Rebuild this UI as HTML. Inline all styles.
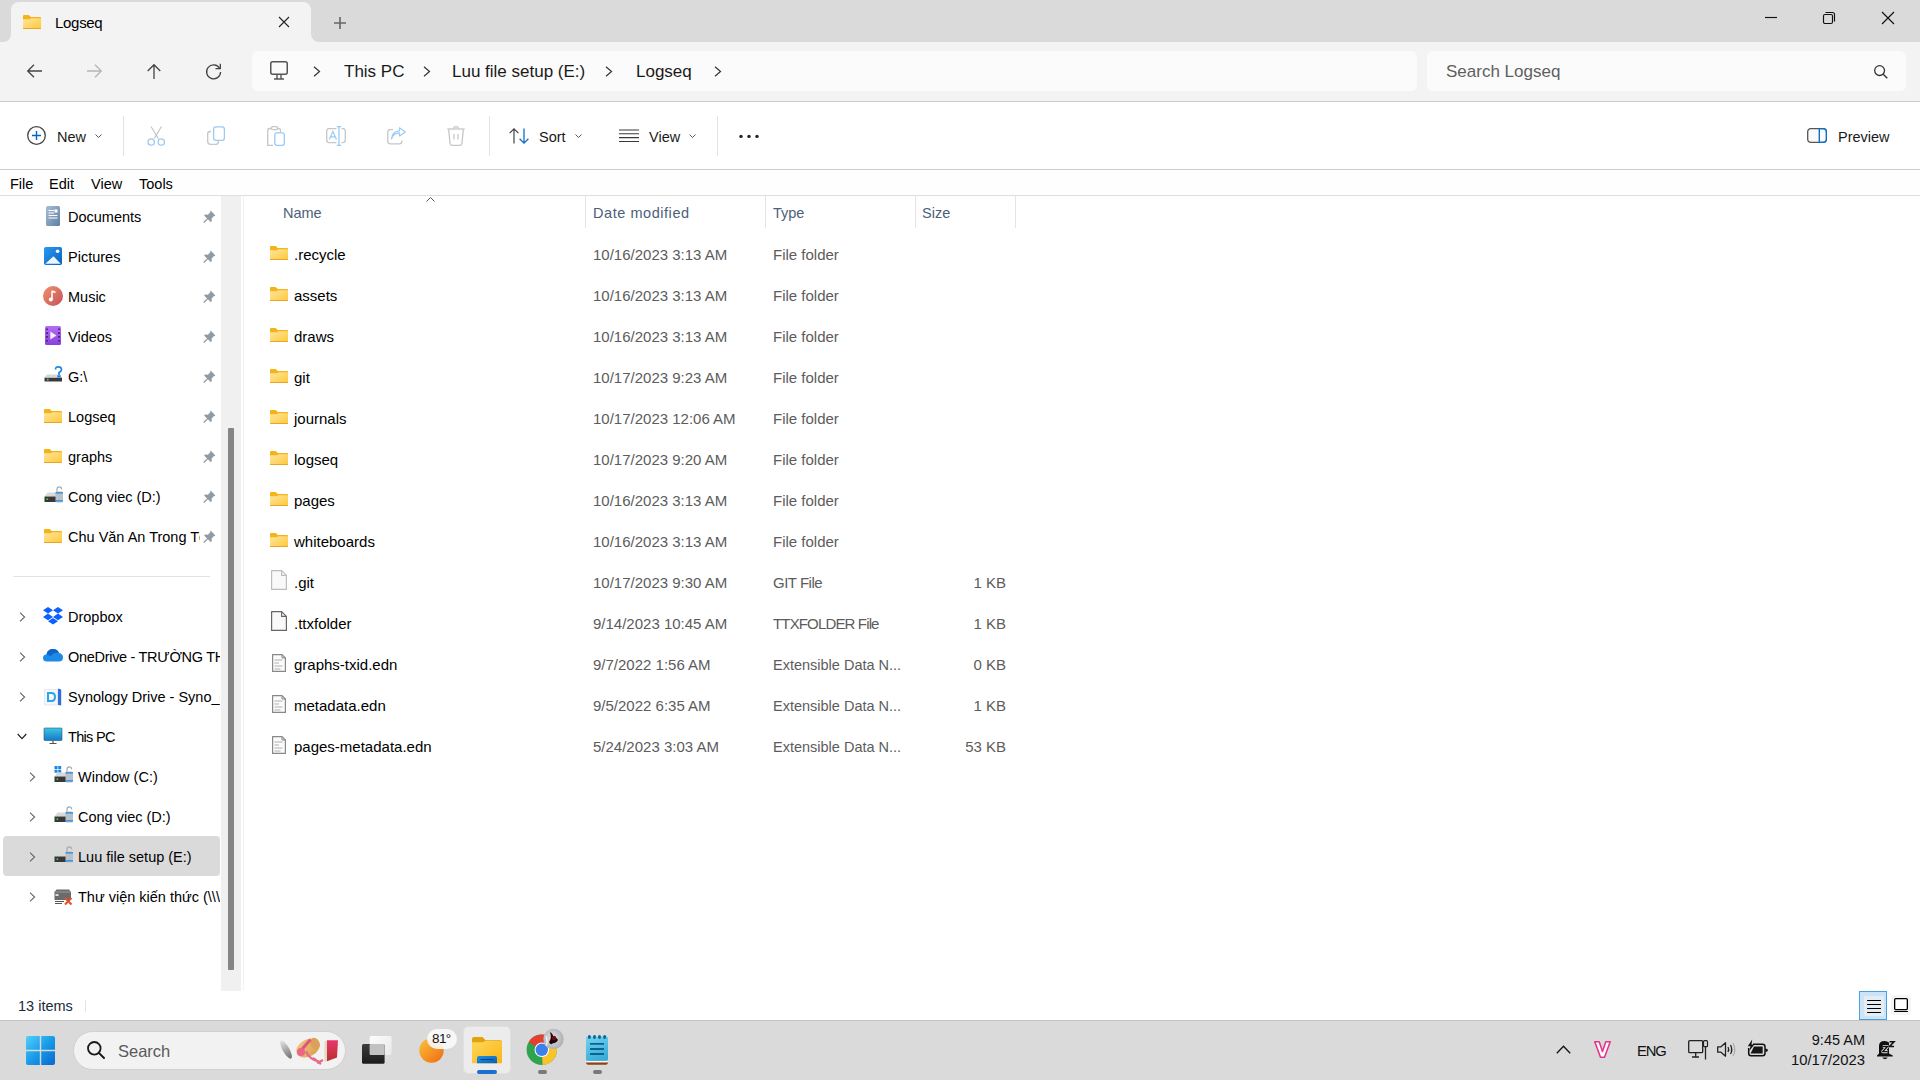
<!DOCTYPE html>
<html><head><meta charset="utf-8">
<style>
*{box-sizing:border-box;margin:0;padding:0}
html,body{width:1920px;height:1080px;overflow:hidden;background:#fff;font-family:"Liberation Sans",sans-serif;color:#1a1a1a}
.a{position:absolute}
.t{position:absolute;white-space:nowrap;line-height:20px;height:20px}
svg.i{position:absolute;overflow:visible}
#titlebar{left:0;top:0;width:1920px;height:42px;background:#dadada}
#tab{left:11px;top:2px;width:300px;height:40px;background:#f3f3f3;border-radius:8px 8px 0 0}
#addr{left:0;top:42px;width:1920px;height:59px;background:#f3f3f3}
#line1{left:0;top:101px;width:1920px;height:1px;background:#cacaca}
#toolbar{left:0;top:102px;width:1920px;height:67px;background:#fff}
#line2{left:0;top:169px;width:1920px;height:1px;background:#cdcdcd}
#menubar{left:0;top:170px;width:1920px;height:25px;background:#fefefe}
#line3{left:0;top:195px;width:1920px;height:1px;background:#dfdfdf}
#taskbar{left:0;top:1020px;width:1920px;height:60px;background:#dadada;border-top:1px solid #c4c4c4}
.box{background:#fbfbfb;border-radius:6px}
.f17{font-size:17px}
.f15{font-size:15px}
.f145{font-size:14.5px}
.sep{position:absolute;width:1px;background:#e3e3e3}
</style></head><body>
<svg width="0" height="0" style="position:absolute">
<defs>
<linearGradient id="fg" x1="0" y1="0" x2="1" y2="1"><stop offset="0" stop-color="#ffe59e"/><stop offset="1" stop-color="#fdc93a"/></linearGradient>
<symbol id="folder" viewBox="0 0 18 14">
<path d="M0 1 Q0 0 1 0 H5.6 L7.8 2 H17 Q18 2 18 3 V13 Q18 14 17 14 H1 Q0 14 0 13 Z" fill="#f3b319"/>
<path d="M0 4.2 H7.2 L8 3.2 H17 Q18 3.2 18 4.2 V13 Q18 14 17 14 H1 Q0 14 0 13 Z" fill="url(#fg)"/>
<rect x="0" y="13" width="18" height="1" rx="0.5" fill="#eaa623"/>
</symbol>
</defs>
</svg>
<div id="titlebar" class="a"></div>
<div id="tab" class="a"></div>
<!-- inverse bottom corners of tab -->
<div class="a" style="left:3px;top:34px;width:8px;height:8px;background:#f3f3f3"></div>
<div class="a" style="left:3px;top:34px;width:8px;height:8px;background:#dadada;border-radius:0 0 8px 0"></div>
<div class="a" style="left:311px;top:34px;width:8px;height:8px;background:#f3f3f3"></div>
<div class="a" style="left:311px;top:34px;width:8px;height:8px;background:#dadada;border-radius:0 0 0 8px"></div>
<svg class="i" style="left:23px;top:15px" width="18" height="14"><use href="#folder"/></svg>
<div class="t f15" style="left:55px;top:12.5px;color:#000;letter-spacing:-0.3px">Logseq</div>
<svg class="i" style="left:279px;top:17px" width="10" height="10"><path d="M0 0L10 10M10 0L0 10" stroke="#222" stroke-width="1.1"/></svg>
<svg class="i" style="left:334px;top:17px" width="12" height="12"><path d="M6 0V12M0 6H12" stroke="#666" stroke-width="1.6"/></svg>
<!-- window controls -->
<svg class="i" style="left:1765px;top:12px" width="12" height="12"><path d="M0 5.5H12" stroke="#111" stroke-width="1.15"/></svg>
<svg class="i" style="left:1823px;top:12px" width="12" height="12"><rect x="0.5" y="2.5" width="9" height="9" rx="1.5" fill="none" stroke="#111" stroke-width="1.15"/><path d="M2.5 0.5H9.5Q11.5 0.5 11.5 2.5V9.5" fill="none" stroke="#111" stroke-width="1.15"/></svg>
<svg class="i" style="left:1882px;top:12px" width="12" height="12"><path d="M0 0L12 12M12 0L0 12" stroke="#111" stroke-width="1.15"/></svg>

<div id="addr" class="a"></div>
<!-- nav arrows -->
<svg class="i" style="left:27px;top:64px" width="15" height="14"><path d="M0.7 7H15M7 0.7L0.7 7L7 13.3" fill="none" stroke="#444" stroke-width="1.3"/></svg>
<svg class="i" style="left:87px;top:64px" width="15" height="14"><path d="M0 7H14.3M8 0.7L14.3 7L8 13.3" fill="none" stroke="#b5b5b5" stroke-width="1.3"/></svg>
<svg class="i" style="left:147px;top:64px" width="14" height="15"><path d="M7 0.7V15M0.7 7L7 0.7L13.3 7" fill="none" stroke="#444" stroke-width="1.3"/></svg>
<svg class="i" style="left:206px;top:63px" width="16" height="16"><path d="M13.6 5.2A7 7 0 1 0 14.6 9" fill="none" stroke="#444" stroke-width="1.3"/><path d="M14.3 0.8V5.6H9.5" fill="none" stroke="#444" stroke-width="1.3"/></svg>
<div class="a box" style="left:252px;top:51px;width:1165px;height:40px"></div>
<svg class="i" style="left:270px;top:61px" width="18" height="19"><rect x="0.75" y="0.75" width="16.5" height="12.5" rx="2" fill="none" stroke="#555" stroke-width="1.5"/><path d="M7 14V17.5M11 14V17.5M4 18H14" stroke="#555" stroke-width="1.4"/></svg>
<svg class="i" style="left:313px;top:66px" width="8" height="11"><path d="M1 0.8L6.5 5.5L1 10.2" fill="none" stroke="#333" stroke-width="1.2"/></svg>
<div class="t f17" style="left:344px;top:62px;color:#1a1a1a">This PC</div>
<svg class="i" style="left:423px;top:66px" width="8" height="11"><path d="M1 0.8L6.5 5.5L1 10.2" fill="none" stroke="#333" stroke-width="1.2"/></svg>
<div class="t f17" style="left:452px;top:62px;color:#1a1a1a">Luu file setup (E:)</div>
<svg class="i" style="left:605px;top:66px" width="8" height="11"><path d="M1 0.8L6.5 5.5L1 10.2" fill="none" stroke="#333" stroke-width="1.2"/></svg>
<div class="t f17" style="left:636px;top:62px;color:#1a1a1a">Logseq</div>
<svg class="i" style="left:714px;top:66px" width="8" height="11"><path d="M1 0.8L6.5 5.5L1 10.2" fill="none" stroke="#333" stroke-width="1.2"/></svg>
<div class="a box" style="left:1427px;top:51px;width:479px;height:40px"></div>
<div class="t f17" style="left:1446px;top:62px;color:#5f5f5f">Search Logseq</div>
<svg class="i" style="left:1874px;top:65px" width="14" height="14"><circle cx="5.6" cy="5.6" r="4.9" fill="none" stroke="#333" stroke-width="1.3"/><path d="M9.2 9.2L13.3 13.3" stroke="#333" stroke-width="1.4"/></svg>
<div id="line1" class="a"></div>

<div id="toolbar" class="a"></div>
<svg class="i" style="left:27px;top:126px" width="19" height="19"><circle cx="9.5" cy="9.5" r="8.8" fill="none" stroke="#444" stroke-width="1.3"/><path d="M9.5 5V14M5 9.5H14" stroke="#0067c0" stroke-width="1.4"/></svg>
<div class="t f145" style="left:57px;top:127px;color:#1a1a1a">New</div>
<svg class="i" style="left:95px;top:134px" width="7" height="5"><path d="M0.5 0.5L3.5 3.5L6.5 0.5" fill="none" stroke="#555" stroke-width="1"/></svg>
<div class="sep" style="left:123px;top:116px;height:40px"></div>
<!-- cut -->
<svg class="i" style="left:147px;top:126px" width="19" height="20"><path d="M4 0.5L11.3 12.5M14.5 0.5L7.2 12.5" stroke="#c2c2c2" stroke-width="1.1" fill="none"/><circle cx="4.2" cy="16" r="3.2" fill="none" stroke="#9ccaf2" stroke-width="1.3"/><circle cx="14.3" cy="16" r="3.2" fill="none" stroke="#9ccaf2" stroke-width="1.3"/></svg>
<!-- copy -->
<svg class="i" style="left:207px;top:126px" width="18" height="19"><path d="M4 5.5H3Q0.7 5.5 0.7 7.8V15.5Q0.7 18.3 3.5 18.3H9Q11.3 18.3 11.3 16V15" fill="none" stroke="#c6c6c6" stroke-width="1.3"/><rect x="6.6" y="0.8" width="10.8" height="13.6" rx="2.4" fill="none" stroke="#9ccaf2" stroke-width="1.3"/></svg>
<!-- paste -->
<svg class="i" style="left:267px;top:126px" width="18" height="20"><path d="M4.5 2.5H2.5Q0.7 2.5 0.7 4.5V19.3H6" fill="none" stroke="#c6c6c6" stroke-width="1.3"/><path d="M13.5 6V4.5Q13.5 2.5 11.5 2.5H10" fill="none" stroke="#c6c6c6" stroke-width="1.3"/><rect x="4.5" y="0.7" width="6" height="3" rx="1.3" fill="none" stroke="#c6c6c6" stroke-width="1.2"/><rect x="7.8" y="6.8" width="9.5" height="12.5" rx="2" fill="none" stroke="#9ccaf2" stroke-width="1.3"/></svg>
<!-- rename -->
<svg class="i" style="left:326px;top:126px" width="20" height="20"><path d="M10.5 2.6H3Q0.7 2.6 0.7 5V14Q0.7 16.6 3 16.6H10.5" fill="none" stroke="#c6c6c6" stroke-width="1.3"/><path d="M15.5 2.6H17Q19.3 2.6 19.3 5V14Q19.3 16.6 17 16.6H15.5" fill="none" stroke="#c6c6c6" stroke-width="1.3"/><path d="M13 0.7V19.3M10.8 0.7H15.2M10.8 19.3H15.2" stroke="#9ccaf2" stroke-width="1.3"/><path d="M3.3 13.5L6.9 5.5L10.5 13.5M4.6 10.8H9.2" fill="none" stroke="#9ccaf2" stroke-width="1.2"/></svg>
<!-- share -->
<svg class="i" style="left:387px;top:127px" width="19" height="18"><path d="M6 2.6H3.2Q0.8 2.6 0.8 5V14.3Q0.8 16.8 3.2 16.8H12.5Q14.8 16.8 14.8 14.5V13.5" fill="none" stroke="#c6c6c6" stroke-width="1.3"/><path d="M4.5 12Q6 6 12.5 5.8V9L18.3 4.9L12.5 0.8V3.8Q5 4.2 4.5 12Z" fill="none" stroke="#9ccaf2" stroke-width="1.2" stroke-linejoin="round"/></svg>
<!-- delete -->
<svg class="i" style="left:447px;top:126px" width="18" height="20"><path d="M0.3 3H17.7" stroke="#c6c6c6" stroke-width="1.3"/><path d="M6.6 2.8Q6.8 0.7 9 0.7Q11.2 0.7 11.4 2.8" fill="none" stroke="#c6c6c6" stroke-width="1.2"/><path d="M1.7 3.5L3 17.3Q3.2 19.3 5 19.3H13Q14.8 19.3 15 17.3L16.3 3.5" fill="none" stroke="#c6c6c6" stroke-width="1.3"/><path d="M7 8V13.5M11 8V13.5" stroke="#c6c6c6" stroke-width="1.3"/></svg>
<div class="sep" style="left:489px;top:116px;height:40px"></div>
<!-- sort -->
<svg class="i" style="left:509px;top:128px" width="21" height="16"><path d="M5 15.5V0.8M0.6 5.2L5 0.8L9.4 5.2" fill="none" stroke="#444" stroke-width="1.2"/><path d="M15 0.5V15.2M10.6 10.8L15 15.2L19.4 10.8" fill="none" stroke="#0f6fc6" stroke-width="1.3"/></svg>
<div class="t f145" style="left:539px;top:127px;color:#1a1a1a">Sort</div>
<svg class="i" style="left:575px;top:134px" width="7" height="5"><path d="M0.5 0.5L3.5 3.5L6.5 0.5" fill="none" stroke="#555" stroke-width="1"/></svg>
<!-- view -->
<svg class="i" style="left:619px;top:129px" width="20" height="14"><path d="M0 1H20M0 4.8H20M0 8.6H20M0 12.4H20" stroke="#3a3a3a" stroke-width="1.05"/></svg>
<div class="t f145" style="left:649px;top:127px;color:#1a1a1a">View</div>
<svg class="i" style="left:689px;top:134px" width="7" height="5"><path d="M0.5 0.5L3.5 3.5L6.5 0.5" fill="none" stroke="#555" stroke-width="1"/></svg>
<div class="sep" style="left:717px;top:116px;height:40px"></div>
<svg class="i" style="left:739px;top:134px" width="20" height="5"><circle cx="2" cy="2.4" r="1.7" fill="#222"/><circle cx="10" cy="2.4" r="1.7" fill="#222"/><circle cx="18" cy="2.4" r="1.7" fill="#222"/></svg>
<!-- preview -->
<svg class="i" style="left:1807px;top:128px" width="20" height="15"><rect x="0.7" y="0.7" width="18.6" height="13.6" rx="3" fill="#fafafa" stroke="#555" stroke-width="1.3"/><path d="M12.3 0.7H16.3Q19.3 0.7 19.3 3.7V11.3Q19.3 14.3 16.3 14.3H12.3Z" fill="#fafafa" stroke="#0f6fc6" stroke-width="1.4"/></svg>
<div class="t f145" style="left:1838px;top:127px;color:#1a1a1a">Preview</div>
<div id="line2" class="a"></div>

<div id="menubar" class="a"></div>
<div class="t f145" style="left:10px;top:174px;color:#000">File</div>
<div class="t f145" style="left:49px;top:174px;color:#000">Edit</div>
<div class="t f145" style="left:91px;top:174px;color:#000">View</div>
<div class="t f145" style="left:139px;top:174px;color:#000">Tools</div>
<div id="line3" class="a"></div>
<div class="a" style="left:221px;top:196px;width:20px;height:795px;background:#f0f0f0"></div>
<div class="a" style="left:228px;top:428px;width:6px;height:542px;background:#858585;border-radius:1px"></div>
<div class="a" style="left:243px;top:196px;width:1px;height:795px;background:#f2f2f2"></div>
<svg class="i" style="left:46px;top:206px" width="14" height="20"><defs><linearGradient id="dg" x1="0" y1="0" x2="1" y2="1"><stop offset="0" stop-color="#a9bfd6"/><stop offset="1" stop-color="#5d7ea3"/></linearGradient></defs><rect x="0" y="0" width="14" height="20" rx="1.5" fill="url(#dg)"/><path d="M2.5 4.5H8M2.5 7H8M2.5 9.5H11.5M2.5 12H11.5" stroke="#fff" stroke-width="1"/><rect x="8.5" y="3.5" width="3" height="3" fill="#fff"/></svg>
<div class="t f145" style="left:68px;top:207px;width:150px;overflow:hidden;color:#000">Documents</div>
<svg class="i" style="left:203px;top:210px" width="13" height="13"><path d="M7.6 0.6L12.4 5.4L10.8 6.2L8.6 8.4L8.8 11.3L7.7 12.1L4.9 9.3L1.2 13L0.3 12.1L4 8.4L1.2 5.6L2 4.5L4.9 4.7L7.1 2.5Z" fill="#8f9aa3"/></svg>
<svg class="i" style="left:44px;top:247px" width="18" height="18"><defs><linearGradient id="pg" x1="0" y1="0" x2="1" y2="1"><stop offset="0" stop-color="#2a9af0"/><stop offset="1" stop-color="#0a62c0"/></linearGradient></defs><rect x="0" y="0" width="18" height="18" rx="1.8" fill="url(#pg)"/><path d="M1.3 16.7L9.5 9.2L16.7 16.7Z" fill="#eef6ff"/><circle cx="13.6" cy="4.3" r="1.8" fill="#fff"/></svg>
<div class="t f145" style="left:68px;top:247px;width:150px;overflow:hidden;color:#000">Pictures</div>
<svg class="i" style="left:203px;top:250px" width="13" height="13"><path d="M7.6 0.6L12.4 5.4L10.8 6.2L8.6 8.4L8.8 11.3L7.7 12.1L4.9 9.3L1.2 13L0.3 12.1L4 8.4L1.2 5.6L2 4.5L4.9 4.7L7.1 2.5Z" fill="#8f9aa3"/></svg>
<svg class="i" style="left:43px;top:286px" width="20" height="20"><defs><linearGradient id="mg" x1="0" y1="0" x2="1" y2="1"><stop offset="0" stop-color="#f0936a"/><stop offset="1" stop-color="#c5505c"/></linearGradient></defs><circle cx="10" cy="10" r="10" fill="url(#mg)"/><path d="M9 5V13M9 5L12.5 6.5" stroke="#fff" stroke-width="1.5" fill="none"/><circle cx="7.8" cy="13.5" r="2" fill="#fff"/></svg>
<div class="t f145" style="left:68px;top:287px;width:150px;overflow:hidden;color:#000">Music</div>
<svg class="i" style="left:203px;top:290px" width="13" height="13"><path d="M7.6 0.6L12.4 5.4L10.8 6.2L8.6 8.4L8.8 11.3L7.7 12.1L4.9 9.3L1.2 13L0.3 12.1L4 8.4L1.2 5.6L2 4.5L4.9 4.7L7.1 2.5Z" fill="#8f9aa3"/></svg>
<svg class="i" style="left:45px;top:326px" width="16" height="19"><defs><linearGradient id="vg" x1="0" y1="0" x2="0" y2="1"><stop offset="0" stop-color="#b46ef0"/><stop offset="1" stop-color="#8840dc"/></linearGradient></defs><rect x="0" y="0" width="16" height="19" rx="1.5" fill="url(#vg)"/><path d="M5.3 5.5L11.5 9.5L5.3 13.5Z" fill="#f4ecff"/><path d="M2 2.5V16.5M14 2.5V16.5" stroke="#3a1a6a" stroke-width="1.6" stroke-dasharray="1.6 2.2"/></svg>
<div class="t f145" style="left:68px;top:327px;width:150px;overflow:hidden;color:#000">Videos</div>
<svg class="i" style="left:203px;top:330px" width="13" height="13"><path d="M7.6 0.6L12.4 5.4L10.8 6.2L8.6 8.4L8.8 11.3L7.7 12.1L4.9 9.3L1.2 13L0.3 12.1L4 8.4L1.2 5.6L2 4.5L4.9 4.7L7.1 2.5Z" fill="#8f9aa3"/></svg>
<svg class="i" style="left:44px;top:366px" width="20" height="16"><path d="M0.5 11.5H18V15.5H0.5Z" fill="#3a3a3a"/><path d="M0.5 11.5L3 8.5H16L18 11.5Z" fill="#d6d6d6"/><circle cx="3.8" cy="13.5" r="0.9" fill="#4fd34f"/><path d="M11.5 3.5Q11.5 0.8 14.5 0.8Q17.5 0.8 17.5 3.5Q17.5 5.5 15 6.5V9" fill="none" stroke="#1c86e0" stroke-width="1.7"/><rect x="13.3" y="9.3" width="3.4" height="2.2" fill="#1c86e0"/></svg>
<div class="t f145" style="left:68px;top:367px;width:150px;overflow:hidden;color:#000">G:\</div>
<svg class="i" style="left:203px;top:370px" width="13" height="13"><path d="M7.6 0.6L12.4 5.4L10.8 6.2L8.6 8.4L8.8 11.3L7.7 12.1L4.9 9.3L1.2 13L0.3 12.1L4 8.4L1.2 5.6L2 4.5L4.9 4.7L7.1 2.5Z" fill="#8f9aa3"/></svg>
<svg class="i" style="left:44px;top:409px" width="18" height="14"><use href="#folder"/></svg>
<div class="t f145" style="left:68px;top:407px;width:150px;overflow:hidden;color:#000">Logseq</div>
<svg class="i" style="left:203px;top:410px" width="13" height="13"><path d="M7.6 0.6L12.4 5.4L10.8 6.2L8.6 8.4L8.8 11.3L7.7 12.1L4.9 9.3L1.2 13L0.3 12.1L4 8.4L1.2 5.6L2 4.5L4.9 4.7L7.1 2.5Z" fill="#8f9aa3"/></svg>
<svg class="i" style="left:44px;top:449px" width="18" height="14"><use href="#folder"/></svg>
<div class="t f145" style="left:68px;top:447px;width:150px;overflow:hidden;color:#000">graphs</div>
<svg class="i" style="left:203px;top:450px" width="13" height="13"><path d="M7.6 0.6L12.4 5.4L10.8 6.2L8.6 8.4L8.8 11.3L7.7 12.1L4.9 9.3L1.2 13L0.3 12.1L4 8.4L1.2 5.6L2 4.5L4.9 4.7L7.1 2.5Z" fill="#8f9aa3"/></svg>
<svg class="i" style="left:44px;top:486px" width="20" height="18"><path d="M0.5 10.5L3.5 6.5H12.5V10.5Z" fill="#d9d9d9"/><rect x="0.5" y="10.5" width="12" height="5.5" fill="#383838"/><circle cx="3.3" cy="13.2" r="0.9" fill="#3fd03f"/><path d="M13 6V3.2Q13 0.8 15.3 0.8Q17.6 0.8 17.6 3.2" fill="none" stroke="#a3acb4" stroke-width="1.2"/><rect x="11.5" y="5.5" width="7.5" height="11" rx="1.6" fill="#b9c1c8"/><rect x="11.5" y="6.2" width="7.5" height="1.3" fill="#2a8ae0"/><rect x="11.5" y="14.2" width="7.5" height="1.3" fill="#2a8ae0"/></svg>
<div class="t f145" style="left:68px;top:487px;width:150px;overflow:hidden;color:#000">Cong viec (D:)</div>
<svg class="i" style="left:203px;top:490px" width="13" height="13"><path d="M7.6 0.6L12.4 5.4L10.8 6.2L8.6 8.4L8.8 11.3L7.7 12.1L4.9 9.3L1.2 13L0.3 12.1L4 8.4L1.2 5.6L2 4.5L4.9 4.7L7.1 2.5Z" fill="#8f9aa3"/></svg>
<svg class="i" style="left:44px;top:529px" width="18" height="14"><use href="#folder"/></svg>
<div class="t f145" style="left:68px;top:527px;width:132px;overflow:hidden;color:#000">Chu Văn An Trong Tổ</div>
<svg class="i" style="left:203px;top:530px" width="13" height="13"><path d="M7.6 0.6L12.4 5.4L10.8 6.2L8.6 8.4L8.8 11.3L7.7 12.1L4.9 9.3L1.2 13L0.3 12.1L4 8.4L1.2 5.6L2 4.5L4.9 4.7L7.1 2.5Z" fill="#8f9aa3"/></svg>
<div class="a" style="left:13px;top:576px;width:197px;height:1px;background:#e2e2e2"></div>
<div class="a" style="left:3px;top:836px;width:217px;height:40px;background:#dadada;border-radius:4px"></div>
<svg class="i" style="left:19px;top:612px" width="7" height="10"><path d="M1 0.7L5.6 5L1 9.3" fill="none" stroke="#666" stroke-width="1.1"/></svg>
<svg class="i" style="left:43px;top:607px" width="20" height="18"><path d="M5 0L0 3.3L5 6.6L10 3.3ZM15 0L10 3.3L15 6.6L20 3.3ZM0 9.9L5 13.2L10 9.9L5 6.6ZM15 6.6L10 9.9L15 13.2L20 9.9ZM5 14.3L10 17.6L15 14.3L10 11Z" fill="#0b61ff"/></svg>
<div class="t f145" style="left:68px;top:607px;width:152px;overflow:hidden;color:#000;">Dropbox</div>
<svg class="i" style="left:19px;top:652px" width="7" height="10"><path d="M1 0.7L5.6 5L1 9.3" fill="none" stroke="#666" stroke-width="1.1"/></svg>
<svg class="i" style="left:43px;top:648px" width="20" height="14"><path d="M4 13.5Q0 13.5 0 10Q0 6.8 3.5 6.5Q4.5 1 10 1Q14.5 1 16 5Q20 5.5 20 9.5Q20 13.5 16 13.5Z" fill="#1d8ae8"/><path d="M3.5 6.5Q4.5 1 10 1Q14.5 1 16 5Q11 4 8 8Z" fill="#0f64c8"/></svg>
<div class="t f145" style="left:68px;top:647px;width:152px;overflow:hidden;color:#000;letter-spacing:-0.3px;">OneDrive - TRƯỜNG THPT</div>
<svg class="i" style="left:19px;top:692px" width="7" height="10"><path d="M1 0.7L5.6 5L1 9.3" fill="none" stroke="#666" stroke-width="1.1"/></svg>
<svg class="i" style="left:44px;top:688px" width="18" height="18"><path d="M0.5 1.5H13.5V17H0.5Z" fill="#f4f7fb" stroke="#dfe4ea" stroke-width="0.8"/><path d="M14 0.5L17.2 1.5V17.5L14 17Z" fill="#2f6fe0"/><path d="M4 5H7.5Q11 5 11 9Q11 13 7.5 13H4Z" fill="none" stroke="#2aa7e6" stroke-width="2"/></svg>
<div class="t f145" style="left:68px;top:687px;width:152px;overflow:hidden;color:#000;">Synology Drive - Syno_ds</div>
<svg class="i" style="left:17px;top:733px" width="10" height="7"><path d="M0.7 1L5 5.6L9.3 1" fill="none" stroke="#222" stroke-width="1.2"/></svg>
<svg class="i" style="left:44px;top:728px" width="18" height="17"><defs><linearGradient id="pcg" x1="0" y1="0" x2="0" y2="1"><stop offset="0" stop-color="#3ec6e0"/><stop offset="1" stop-color="#1478c8"/></linearGradient></defs><rect x="0" y="0" width="18" height="12.5" rx="0.8" fill="url(#pcg)" stroke="#1a5a8a" stroke-width="0.6"/><path d="M9 12.5V15M5.5 15.5H12.5" stroke="#555" stroke-width="1.2"/></svg>
<div class="t f145" style="left:68px;top:727px;width:152px;overflow:hidden;color:#000;letter-spacing:-0.7px;">This PC</div>
<svg class="i" style="left:29px;top:772px" width="7" height="10"><path d="M1 0.7L5.6 5L1 9.3" fill="none" stroke="#666" stroke-width="1.1"/></svg>
<svg class="i" style="left:54px;top:766px" width="20" height="18"><rect x="0.5" y="0" width="3" height="3" fill="#1a86e8"/><rect x="4.2" y="0" width="3" height="3" fill="#1a86e8"/><rect x="0.5" y="3.7" width="3" height="3" fill="#1a86e8"/><rect x="4.2" y="3.7" width="3" height="3" fill="#1a86e8"/><path d="M0.5 10.5L3.5 6.5H12.5V10.5Z" fill="#d9d9d9"/><rect x="0.5" y="10.5" width="12" height="5.5" fill="#383838"/><circle cx="3.3" cy="13.2" r="0.9" fill="#3fd03f"/><path d="M13 6V3.2Q13 0.8 15.3 0.8Q17.6 0.8 17.6 3.2" fill="none" stroke="#a3acb4" stroke-width="1.2"/><rect x="11.5" y="5.5" width="7.5" height="11" rx="1.6" fill="#b9c1c8"/><rect x="11.5" y="6.2" width="7.5" height="1.3" fill="#2a8ae0"/><rect x="11.5" y="14.2" width="7.5" height="1.3" fill="#2a8ae0"/></svg>
<div class="t f145" style="left:78px;top:767px;width:142px;overflow:hidden;color:#000;">Window (C:)</div>
<svg class="i" style="left:29px;top:812px" width="7" height="10"><path d="M1 0.7L5.6 5L1 9.3" fill="none" stroke="#666" stroke-width="1.1"/></svg>
<svg class="i" style="left:54px;top:806px" width="20" height="18"><path d="M0.5 10.5L3.5 6.5H12.5V10.5Z" fill="#d9d9d9"/><rect x="0.5" y="10.5" width="12" height="5.5" fill="#383838"/><circle cx="3.3" cy="13.2" r="0.9" fill="#3fd03f"/><path d="M13 6V3.2Q13 0.8 15.3 0.8Q17.6 0.8 17.6 3.2" fill="none" stroke="#a3acb4" stroke-width="1.2"/><rect x="11.5" y="5.5" width="7.5" height="11" rx="1.6" fill="#b9c1c8"/><rect x="11.5" y="6.2" width="7.5" height="1.3" fill="#2a8ae0"/><rect x="11.5" y="14.2" width="7.5" height="1.3" fill="#2a8ae0"/></svg>
<div class="t f145" style="left:78px;top:807px;width:142px;overflow:hidden;color:#000;">Cong viec (D:)</div>
<svg class="i" style="left:29px;top:852px" width="7" height="10"><path d="M1 0.7L5.6 5L1 9.3" fill="none" stroke="#666" stroke-width="1.1"/></svg>
<svg class="i" style="left:54px;top:846px" width="20" height="18"><path d="M0.5 10.5L3.5 6.5H12.5V10.5Z" fill="#d9d9d9"/><rect x="0.5" y="10.5" width="12" height="5.5" fill="#383838"/><circle cx="3.3" cy="13.2" r="0.9" fill="#3fd03f"/><path d="M13 6V3.2Q13 0.8 15.3 0.8Q17.6 0.8 17.6 3.2" fill="none" stroke="#a3acb4" stroke-width="1.2"/><rect x="11.5" y="5.5" width="7.5" height="11" rx="1.6" fill="#b9c1c8"/><rect x="11.5" y="6.2" width="7.5" height="1.3" fill="#2a8ae0"/><rect x="11.5" y="14.2" width="7.5" height="1.3" fill="#2a8ae0"/></svg>
<div class="t f145" style="left:78px;top:847px;width:142px;overflow:hidden;color:#000;">Luu file setup (E:)</div>
<svg class="i" style="left:29px;top:892px" width="7" height="10"><path d="M1 0.7L5.6 5L1 9.3" fill="none" stroke="#666" stroke-width="1.1"/></svg>
<svg class="i" style="left:54px;top:889px" width="19" height="16"><path d="M0.5 3L2.5 0.5H15L17 3V11H0.5Z" fill="#6b6b6b"/><path d="M0.5 3H17" stroke="#9a9a9a"/><rect x="1.5" y="5" width="3" height="2" fill="#ddd"/><path d="M1 12.5H10M1 14.5H8" stroke="#555" stroke-width="1.2"/><path d="M11 9L17.5 15.5M17.5 9L11 15.5" stroke="#e0502a" stroke-width="2"/></svg>
<div class="t f145" style="left:78px;top:887px;width:142px;overflow:hidden;color:#000;">Thư viện kiến thức (\\\\</div>
<div class="t f145" style="left:283px;top:203px;color:#4c607a">Name</div>
<svg class="i" style="left:426px;top:197px" width="9" height="5"><path d="M0.5 4.5L4.5 0.5L8.5 4.5" fill="none" stroke="#555" stroke-width="1"/></svg>
<div class="t f145" style="left:593px;top:203px;color:#4c607a;letter-spacing:0.55px">Date modified</div>
<div class="t f145" style="left:773px;top:203px;color:#4c607a">Type</div>
<div class="t f145" style="left:922px;top:203px;color:#4c607a">Size</div>
<div class="a" style="left:585px;top:196px;width:1px;height:32px;background:#e5e5e5"></div>
<div class="a" style="left:765px;top:196px;width:1px;height:32px;background:#e5e5e5"></div>
<div class="a" style="left:915px;top:196px;width:1px;height:32px;background:#e5e5e5"></div>
<div class="a" style="left:1015px;top:196px;width:1px;height:32px;background:#e5e5e5"></div>
<svg class="i" style="left:270px;top:246px" width="18" height="14"><use href="#folder"/></svg>
<div class="t f15" style="left:294px;top:245px;color:#000">.recycle</div>
<div class="t f15" style="left:593px;top:245px;color:#5c5c5c">10/16/2023 3:13 AM</div>
<div class="t f15" style="left:773px;top:245px;color:#5c5c5c;">File folder</div>
<svg class="i" style="left:270px;top:287px" width="18" height="14"><use href="#folder"/></svg>
<div class="t f15" style="left:294px;top:286px;color:#000">assets</div>
<div class="t f15" style="left:593px;top:286px;color:#5c5c5c">10/16/2023 3:13 AM</div>
<div class="t f15" style="left:773px;top:286px;color:#5c5c5c;">File folder</div>
<svg class="i" style="left:270px;top:328px" width="18" height="14"><use href="#folder"/></svg>
<div class="t f15" style="left:294px;top:327px;color:#000">draws</div>
<div class="t f15" style="left:593px;top:327px;color:#5c5c5c">10/16/2023 3:13 AM</div>
<div class="t f15" style="left:773px;top:327px;color:#5c5c5c;">File folder</div>
<svg class="i" style="left:270px;top:369px" width="18" height="14"><use href="#folder"/></svg>
<div class="t f15" style="left:294px;top:368px;color:#000">git</div>
<div class="t f15" style="left:593px;top:368px;color:#5c5c5c">10/17/2023 9:23 AM</div>
<div class="t f15" style="left:773px;top:368px;color:#5c5c5c;">File folder</div>
<svg class="i" style="left:270px;top:410px" width="18" height="14"><use href="#folder"/></svg>
<div class="t f15" style="left:294px;top:409px;color:#000">journals</div>
<div class="t f15" style="left:593px;top:409px;color:#5c5c5c">10/17/2023 12:06 AM</div>
<div class="t f15" style="left:773px;top:409px;color:#5c5c5c;">File folder</div>
<svg class="i" style="left:270px;top:451px" width="18" height="14"><use href="#folder"/></svg>
<div class="t f15" style="left:294px;top:450px;color:#000">logseq</div>
<div class="t f15" style="left:593px;top:450px;color:#5c5c5c">10/17/2023 9:20 AM</div>
<div class="t f15" style="left:773px;top:450px;color:#5c5c5c;">File folder</div>
<svg class="i" style="left:270px;top:492px" width="18" height="14"><use href="#folder"/></svg>
<div class="t f15" style="left:294px;top:491px;color:#000">pages</div>
<div class="t f15" style="left:593px;top:491px;color:#5c5c5c">10/16/2023 3:13 AM</div>
<div class="t f15" style="left:773px;top:491px;color:#5c5c5c;">File folder</div>
<svg class="i" style="left:270px;top:533px" width="18" height="14"><use href="#folder"/></svg>
<div class="t f15" style="left:294px;top:532px;color:#000">whiteboards</div>
<div class="t f15" style="left:593px;top:532px;color:#5c5c5c">10/16/2023 3:13 AM</div>
<div class="t f15" style="left:773px;top:532px;color:#5c5c5c;">File folder</div>
<svg class="i" style="left:271px;top:570px" width="16" height="20"><path d="M0.6 0.6H10.6L15.4 5.4V19.4H0.6Z" fill="#f9f9f9" stroke="#bdbdbd" stroke-width="1.2" stroke-linejoin="round"/><path d="M10.6 0.6V5.4H15.4" fill="none" stroke="#bdbdbd" stroke-width="1.1"/></svg>
<div class="t f15" style="left:294px;top:573px;color:#000">.git</div>
<div class="t f15" style="left:593px;top:573px;color:#5c5c5c">10/17/2023 9:30 AM</div>
<div class="t f15" style="left:773px;top:573px;color:#5c5c5c;letter-spacing:-0.5px">GIT File</div>
<div class="t f15" style="left:905px;width:101px;text-align:right;top:573px;color:#5c5c5c">1 KB</div>
<svg class="i" style="left:271px;top:611px" width="16" height="20"><path d="M0.6 0.6H10.6L15.4 5.4V19.4H0.6Z" fill="#f9f9f9" stroke="#666" stroke-width="1.2" stroke-linejoin="round"/><path d="M10.6 0.6V5.4H15.4" fill="none" stroke="#666" stroke-width="1.1"/></svg>
<div class="t f15" style="left:294px;top:614px;color:#000">.ttxfolder</div>
<div class="t f15" style="left:593px;top:614px;color:#5c5c5c">9/14/2023 10:45 AM</div>
<div class="t f15" style="left:773px;top:614px;color:#5c5c5c;letter-spacing:-0.85px">TTXFOLDER File</div>
<div class="t f15" style="left:905px;width:101px;text-align:right;top:614px;color:#5c5c5c">1 KB</div>
<svg class="i" style="left:272px;top:654px" width="14" height="18"><path d="M0.6 0.6H10L13.4 4V17.4H0.6Z" fill="#fbfbfb" stroke="#888" stroke-width="1.2" stroke-linejoin="round"/><path d="M10 0.6V4H13.4" fill="none" stroke="#888" stroke-width="1"/><path d="M2.5 6H10.5M2.5 9H7M2.5 12H10.5M2.5 15H8.5" stroke="#b0b0b0" stroke-width="1.1"/></svg>
<div class="t f15" style="left:294px;top:655px;color:#000">graphs-txid.edn</div>
<div class="t f15" style="left:593px;top:655px;color:#5c5c5c">9/7/2022 1:56 AM</div>
<div class="t f15" style="left:773px;top:655px;color:#5c5c5c;font-size:14.5px">Extensible Data N...</div>
<div class="t f15" style="left:905px;width:101px;text-align:right;top:655px;color:#5c5c5c">0 KB</div>
<svg class="i" style="left:272px;top:695px" width="14" height="18"><path d="M0.6 0.6H10L13.4 4V17.4H0.6Z" fill="#fbfbfb" stroke="#888" stroke-width="1.2" stroke-linejoin="round"/><path d="M10 0.6V4H13.4" fill="none" stroke="#888" stroke-width="1"/><path d="M2.5 6H10.5M2.5 9H7M2.5 12H10.5M2.5 15H8.5" stroke="#b0b0b0" stroke-width="1.1"/></svg>
<div class="t f15" style="left:294px;top:696px;color:#000">metadata.edn</div>
<div class="t f15" style="left:593px;top:696px;color:#5c5c5c">9/5/2022 6:35 AM</div>
<div class="t f15" style="left:773px;top:696px;color:#5c5c5c;font-size:14.5px">Extensible Data N...</div>
<div class="t f15" style="left:905px;width:101px;text-align:right;top:696px;color:#5c5c5c">1 KB</div>
<svg class="i" style="left:272px;top:736px" width="14" height="18"><path d="M0.6 0.6H10L13.4 4V17.4H0.6Z" fill="#fbfbfb" stroke="#888" stroke-width="1.2" stroke-linejoin="round"/><path d="M10 0.6V4H13.4" fill="none" stroke="#888" stroke-width="1"/><path d="M2.5 6H10.5M2.5 9H7M2.5 12H10.5M2.5 15H8.5" stroke="#b0b0b0" stroke-width="1.1"/></svg>
<div class="t f15" style="left:294px;top:737px;color:#000">pages-metadata.edn</div>
<div class="t f15" style="left:593px;top:737px;color:#5c5c5c">5/24/2023 3:03 AM</div>
<div class="t f15" style="left:773px;top:737px;color:#5c5c5c;font-size:14.5px">Extensible Data N...</div>
<div class="t f15" style="left:905px;width:101px;text-align:right;top:737px;color:#5c5c5c">53 KB</div>
<div class="t f145" style="left:18px;top:996px;color:#1a2a3a">13 items</div>
<div class="a" style="left:85px;top:1000px;width:1px;height:12px;background:#e5e5e5"></div>
<div class="a" style="left:1859px;top:991px;width:28px;height:29px;background:#cce4f7;border:1px solid #4a9fe0"></div>
<div class="a" style="left:1864px;top:996px;width:20px;height:20px;background:#e5edf3;border-radius:2px"></div>
<svg class="i" style="left:1867px;top:1000px" width="14" height="13"><path d="M0.5 0.5H13.5M0.5 4.5H13.5M0.5 8.5H13.5M0.5 12.5H13.5" stroke="#000" stroke-width="1.1" stroke-linecap="round"/></svg>
<div class="a" style="left:1891px;top:995px;width:20px;height:20px;background:#f5f5f5;border-radius:2px"></div>
<svg class="i" style="left:1894px;top:998px" width="14" height="14"><rect x="0.65" y="0.65" width="12.7" height="10.9" rx="1" fill="#fff" stroke="#000" stroke-width="1.3"/><path d="M0.5 13.5H13.5" stroke="#000" stroke-width="1.1" stroke-linecap="round"/></svg><div id="taskbar" class="a"></div>
<!-- start -->
<svg class="i" style="left:26px;top:1036px" width="29" height="29"><defs><linearGradient id="wg" x1="0" y1="0" x2="1" y2="1"><stop offset="0" stop-color="#52d0fb"/><stop offset="0.5" stop-color="#1a9be8"/><stop offset="1" stop-color="#0667cf"/></linearGradient></defs><path d="M2 0H13.8V13.8H0V2Q0 0 2 0ZM15.2 0H27Q29 0 29 2V13.8H15.2ZM0 15.2H13.8V29H2Q0 29 0 27ZM15.2 15.2H29V27Q29 29 27 29H15.2Z" fill="url(#wg)"/></svg>
<!-- search pill -->
<div class="a" style="left:73px;top:1031px;width:273px;height:39px;border-radius:20px;background:#f2f2f2;border:1px solid #d0d0d0"></div>
<svg class="i" style="left:87px;top:1041px" width="18" height="18"><circle cx="7.3" cy="7.3" r="6.3" fill="none" stroke="#1a1a1a" stroke-width="1.8"/><path d="M11.9 11.9L17 17" stroke="#1a1a1a" stroke-width="2" stroke-linecap="round"/></svg>
<div class="t" style="left:118px;top:1041px;font-size:16.5px;color:#5a5a5a">Search</div>
<!-- search highlight images -->
<svg class="i" style="left:279px;top:1036px" width="62" height="30"><defs><linearGradient id="fe" x1="0" y1="0" x2="0" y2="1"><stop offset="0" stop-color="#e6e6e6"/><stop offset="1" stop-color="#6e6e6e"/></linearGradient><linearGradient id="hatg" x1="0" y1="0" x2="1" y2="1"><stop offset="0" stop-color="#f3c98a"/><stop offset="1" stop-color="#d89a48"/></linearGradient><linearGradient id="bk" x1="0" y1="0" x2="0" y2="1"><stop offset="0" stop-color="#e8386a"/><stop offset="1" stop-color="#b8302e"/></linearGradient></defs>
<ellipse cx="7" cy="13.5" rx="3.3" ry="10.5" transform="rotate(-30 7 13.5)" fill="url(#fe)"/>
<ellipse cx="29" cy="12" rx="12.5" ry="8.5" transform="rotate(-28 29 12)" fill="url(#hatg)"/>
<ellipse cx="36" cy="7.5" rx="4.5" ry="6" transform="rotate(-28 36 7.5)" fill="#dba15a"/>
<path d="M21.5 15L31.5 3.5" stroke="#e0567a" stroke-width="3"/>
<path d="M27 15.5Q31 24 40 25.5M34 22L42 28M38 27L44 24" fill="none" stroke="#e36b8b" stroke-width="2.2"/>
<circle cx="22" cy="16" r="4" fill="#ec6584"/>
<path d="M45.5 5.5L48 4.2V25.2L45.5 25.8Z" fill="#e5d8bc"/><path d="M48 4.2L59 4.2L58 21.5L48 25.2Z" fill="url(#bk)"/>
</svg>
<!-- task view -->
<svg class="i" style="left:361px;top:1035px" width="31" height="29"><defs><linearGradient id="tvg" x1="0" y1="0" x2="1" y2="1"><stop offset="0" stop-color="#fdfdfd"/><stop offset="1" stop-color="#e8e8e8"/></linearGradient><linearGradient id="tvd" x1="0" y1="0" x2="0" y2="1"><stop offset="0" stop-color="#3a3a3a"/><stop offset="1" stop-color="#1c1c1c"/></linearGradient></defs><rect x="8.6" y="1" width="22" height="19" rx="1.5" fill="url(#tvg)"/><rect x="1" y="9" width="22.6" height="19.8" rx="1.5" fill="url(#tvd)"/><rect x="8.6" y="9" width="15" height="11" rx="1" fill="#c2c2c2"/></svg>
<!-- weather -->
<svg class="i" style="left:419px;top:1038px" width="26" height="25"><defs><linearGradient id="sg" x1="0" y1="0" x2="1" y2="1"><stop offset="0" stop-color="#f9c23c"/><stop offset="1" stop-color="#f06a10"/></linearGradient></defs><circle cx="12.5" cy="12.5" r="12.2" fill="url(#sg)"/></svg>
<div class="a" style="left:427px;top:1029px;width:30px;height:20px;border-radius:10px;background:rgba(250,250,250,0.9)"></div>
<div class="t" style="left:432px;top:1029px;font-size:13.5px;letter-spacing:-0.6px;color:#111">81°</div>
<!-- explorer -->
<div class="a" style="left:463px;top:1026px;width:48px;height:48px;border-radius:5px;background:#ececec;border:1px solid #e0e0e0"></div>
<svg class="i" style="left:472px;top:1037px" width="30" height="27"><defs><linearGradient id="exg" x1="0" y1="0" x2="1" y2="1"><stop offset="0" stop-color="#ffd75a"/><stop offset="1" stop-color="#f8b516"/></linearGradient><linearGradient id="exb" x1="0" y1="0" x2="1" y2="1"><stop offset="0" stop-color="#1f90e0"/><stop offset="1" stop-color="#0a5fb8"/></linearGradient></defs><path d="M0 2Q0 0 2 0H10.5L13.5 3.2H28.5Q30 3.2 30 4.7V10H0Z" fill="#e3a20a"/><path d="M0 5.3H10.8L13 4H28.7Q30 4 30 5.3V26.3H0Z" fill="url(#exg)"/><path d="M5 26.3V21Q5 19 7 19H23Q25 19 25 21V26.3Z" fill="url(#exb)"/><path d="M9 22.5H21" stroke="#0a3f84" stroke-width="1.2" stroke-linecap="round"/></svg>
<div class="a" style="left:477px;top:1070px;width:20px;height:4px;border-radius:2px;background:#1a6fd0"></div>
<!-- chrome -->
<svg class="i" style="left:526px;top:1028px" width="40" height="38"><defs><radialGradient id="av" cx="0.45" cy="0.45" r="0.6"><stop offset="0" stop-color="#e6e2e4"/><stop offset="1" stop-color="#a9acb4"/></radialGradient></defs>
<circle cx="15.8" cy="21.8" r="15.2" fill="#2ea44f"/><path d="M15.8 21.8L2.6 14.2A15.2 15.2 0 0 1 29 14.2Z" fill="#e3402f"/><path d="M15.8 21.8L29 14.2A15.2 15.2 0 0 1 16.6 37Z" fill="#fbc32a"/><circle cx="15.8" cy="21.8" r="7.3" fill="#fff"/><circle cx="15.8" cy="21.8" r="6.2" fill="#3d80ea"/>
<circle cx="27.5" cy="11" r="10.2" fill="url(#av)"/><path d="M24 4Q28 6 27 11Q30 8 32 12Q30 16 27 15Q25 18 23 14Q26 10 24 4Z" fill="#1e0808"/><circle cx="28" cy="10" r="2.2" fill="#6a0c10"/><path d="M20 8Q22 14 20 18" stroke="#fff" stroke-width="1.5" fill="none" opacity="0.7"/></svg>
<div class="a" style="left:538px;top:1070px;width:9px;height:4px;border-radius:2px;background:#7a7a7a"></div>
<!-- notepad -->
<svg class="i" style="left:585px;top:1034px" width="24" height="32"><defs><linearGradient id="npg" x1="0" y1="0" x2="0.4" y2="1"><stop offset="0" stop-color="#74d3f2"/><stop offset="1" stop-color="#3aaed9"/></linearGradient></defs><rect x="1" y="2.6" width="22" height="24.3" rx="1.6" fill="url(#npg)"/><ellipse cx="4.4" cy="3" rx="1.5" ry="2" fill="#0a6892"/><ellipse cx="9.5" cy="3" rx="1.5" ry="2" fill="#0a6892"/><ellipse cx="14.5" cy="3" rx="1.5" ry="2" fill="#0a6892"/><ellipse cx="19.6" cy="3" rx="1.5" ry="2" fill="#0a6892"/><path d="M5 9.8H19M5 15H19M5 20H19" stroke="#0a6390" stroke-width="1.8"/><rect x="1.5" y="26.9" width="21" height="1.6" fill="#f6f6f6"/><path d="M1 27.5Q1 30.7 3.2 30.7H20.8Q23 30.7 23 27.5V28.6H1Z" fill="#944010"/></svg>
<div class="a" style="left:593px;top:1070px;width:9px;height:4px;border-radius:2px;background:#7a7a7a"></div>
<!-- tray -->
<svg class="i" style="left:1556px;top:1045px" width="15" height="9"><path d="M0.8 8.2L7.5 1.3L14.2 8.2" fill="none" stroke="#111" stroke-width="1.3"/></svg>
<svg class="i" style="left:1594px;top:1041px" width="17" height="17"><path d="M0.8 0.8H5.2L8.5 10.5L11.8 0.8H16.2L10.5 16.2H6.5Z" fill="#fff" stroke="#e8348f" stroke-width="1.6" stroke-linejoin="round"/></svg>
<div class="t" style="left:1637px;top:1041px;font-size:14.8px;letter-spacing:-1.1px;color:#111">ENG</div>
<svg class="i" style="left:1688px;top:1040px" width="21" height="20"><rect x="0.7" y="0.7" width="14" height="12" rx="1" fill="none" stroke="#222" stroke-width="1.3"/><path d="M7.7 13V16.5M4 17H11" stroke="#222" stroke-width="1.3"/><rect x="15.5" y="0.7" width="4" height="6" rx="1" fill="none" stroke="#222" stroke-width="1.2"/><path d="M17.5 7V19.5" stroke="#222" stroke-width="1.3"/></svg>
<svg class="i" style="left:1717px;top:1042px" width="21" height="15"><path d="M0.7 4.8H4L8.5 0.8V14.2L4 10.2H0.7Z" fill="none" stroke="#222" stroke-width="1.3" stroke-linejoin="round"/><path d="M11 5Q12.5 7.5 11 10M13.5 3Q16 7.5 13.5 12" fill="none" stroke="#222" stroke-width="1.3"/><path d="M16 1Q19.5 7.5 16 14" fill="none" stroke="#aaa" stroke-width="1.1"/></svg>
<svg class="i" style="left:1740px;top:1032px" width="32" height="28"><path d="M9.5 11.7H2.5Q0 11.7 0 0" fill="none"/><path d="M13 12.3H22.5Q25 12.3 25 14.8V21.2Q25 23.7 22.5 23.7H11Q8.7 23.7 8.7 21.2V16" fill="none" stroke="#111" stroke-width="1.5"/><path d="M14 14.5H22.7V21.5H10.6Z" fill="#161616"/><path d="M25.3 16.5Q28 16.5 28 18.3Q28 20 25.3 20Z" fill="#161616"/><path d="M12.2 7.6L7.8 14.2H10.6L9 19.3L14.4 12.4H11.5Z" fill="#111"/></svg>
<div class="t" style="left:1765px;width:100px;text-align:right;top:1030px;font-size:14.5px;color:#111">9:45 AM</div>
<div class="t" style="left:1765px;width:100px;text-align:right;top:1050px;font-size:14.8px;color:#111">10/17/2023</div>
<svg class="i" style="left:1870px;top:1032px" width="30" height="32"><path d="M9 21.5V14Q9 9 14.5 9Q17.5 9 19 10.5V21.5L22.8 23.6V24.5H7V23.6Z" fill="#111"/><path d="M12.2 25.6Q15 29 17.8 25.6Z" fill="#111"/><path d="M12.8 14.5H17.5L12.8 19.6H17.5" fill="none" stroke="#e8e8e8" stroke-width="3.2" stroke-linejoin="round"/><path d="M12.8 14.5H17.5L12.8 19.6H17.5" fill="none" stroke="#111" stroke-width="1.4"/><path d="M19.5 9.8H24L19.5 14.5H24" fill="none" stroke="#111" stroke-width="1.6"/></svg>
</body></html>
